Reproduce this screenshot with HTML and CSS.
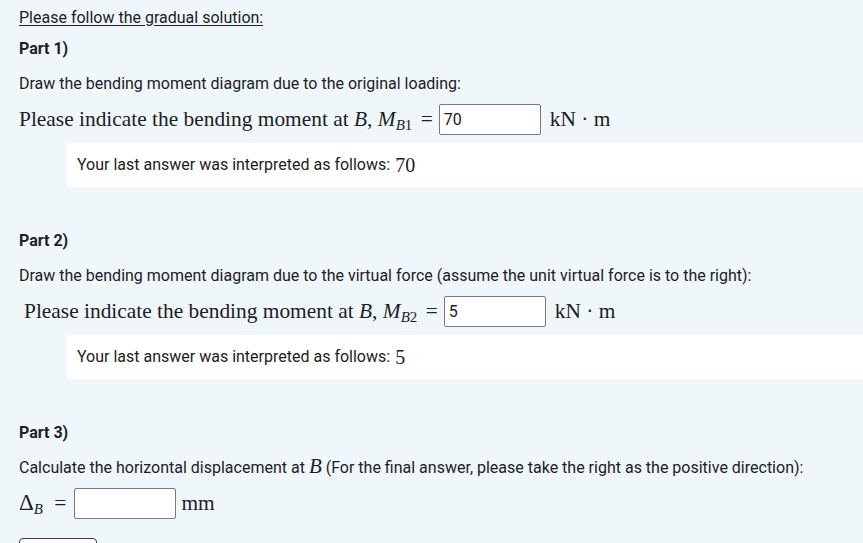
FILE: index.html
```html
<!DOCTYPE html>
<html>
<head>
<meta charset="utf-8">
<link rel="stylesheet" href="styles.css">
</head>
<body>
<div class="formulation">
  <p class="intro"><u>Please follow the gradual solution:</u></p>

  <p class="part part-first">Part 1)</p>
  <p class="text">Draw the bending moment diagram due to the original loading:</p>
  <div class="mathline">
    <span class="math">Please indicate the bending moment at <i>B</i>, <i>M</i><sub><i>B</i>1</sub> <span class="eq">=</span></span>
    <input class="answer" type="text" value="70">
    <span class="math unit">kN · m</span>
  </div>
  <div class="feedback">Your last answer was interpreted as follows: <span class="math num">70</span></div>

  <p class="part">Part 2)</p>
  <p class="text">Draw the bending moment diagram due to the virtual force (assume the unit virtual force is to the right):</p>
  <div class="mathline indent">
    <span class="math">Please indicate the bending moment at <i>B</i>, <i>M</i><sub><i>B</i>2</sub> <span class="eq">=</span></span>
    <input class="answer" type="text" value="5">
    <span class="math unit">kN · m</span>
  </div>
  <div class="feedback">Your last answer was interpreted as follows: <span class="math num">5</span></div>

  <p class="part">Part 3)</p>
  <p class="text">Calculate the horizontal displacement at <span class="math inl"><i>B</i></span> (For the final answer, please take the right as the positive direction):</p>
  <div class="mathline">
    <span class="math"><span class="delta">Δ</span><sub><i>B</i></sub> <span class="eq eq-wide">=</span></span>
    <input class="answer small" type="text" value="">
    <span class="math unit mm">mm</span>
  </div>
  <button class="check" type="button">Check</button>
</div>
</body>
</html>
```

FILE: styles.css
```css
html, body {
  margin: 0;
  padding: 0;
  background: #eff7fa;
}
body {
  font-family: Roboto, "Noto Sans", sans-serif;
  font-size: 16px;
  line-height: 22px;
  color: #1d2125;
  width: 863px;
  height: 543px;
  overflow: hidden;
}
.formulation {
  display: flex;
  flex-direction: column;
  align-items: flex-start;
  padding: 7px 0 0 19px;
}
p {
  margin: 0;
}
.intro u {
  text-decoration: underline;
  text-underline-offset: 2px;
}
.part {
  font-weight: 700;
  margin-top: 43px;
}
.part-first {
  margin-top: 9px;
}
.text {
  margin-top: 13px;
}
.math {
  font-family: "Liberation Serif", "DejaVu Serif", serif;
  font-size: 21.4px;
  color: #1d2125;
}
.math sub {
  font-size: 15px;
  vertical-align: -4px;
  line-height: 0;
}
.delta {
  font-size: 23px;
}
.eq {
  margin-left: 3px;
}
.eq-wide {
  margin-left: 6px;
}
.mathline {
  display: flex;
  align-items: center;
  margin-top: 8px;
  height: 32px;
}
.mathline.indent {
  margin-left: 5px;
}
.answer {
  box-sizing: border-box;
  width: 102px;
  height: 31px;
  margin: 0 0 0 6px;
  padding: 0 4px;
  border: 1px solid #7a7a7a;
  border-radius: 2px;
  background: #fff;
  font-family: Roboto, sans-serif;
  font-size: 16px;
  color: #1d2125;
}
.answer.small {
  margin-left: 8px;
}
.unit {
  margin-left: 9px;
}
.unit.mm {
  margin-left: 5px;
}
.feedback {
  align-self: stretch;
  margin: 8px 0 0 48px;
  height: 44px;
  display: flex;
  align-items: center;
  padding-left: 10px;
  background: #fff;
}
.num {
  font-size: 20px;
  margin-left: 5px;
}
.inl {
  font-size: 21px;
  line-height: 0;
}
.check {
  margin-top: 19px;
  width: 78px;
  height: 40px;
  padding: 14px 0 0;
  border: 1px solid #3c3c3c;
  border-radius: 4px;
  background: #fff;
  font-family: Roboto, sans-serif;
  font-size: 16px;
  color: #1d2125;
}
```
